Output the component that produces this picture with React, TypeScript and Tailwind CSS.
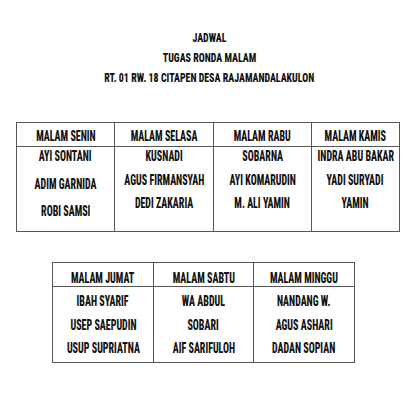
const F = { fontFamily: '"Roboto Condensed", Roboto, "Liberation Sans", sans-serif' };

function T({ children }: { children: React.ReactNode }) {
  return (
    <div className="flex justify-center">
      <span className="inline-block whitespace-nowrap font-extrabold leading-[18px] text-[14px] text-[#111] scale-x-[0.71]">{children}</span>
    </div>
  );
}

const t1 = [
  { h: 'MALAM SENIN', n: ['AYI SONTANI', 'ADIM GARNIDA', 'ROBI SAMSI'], gap: 'gap-[9.5px]' },
  { h: 'MALAM SELASA', n: ['KUSNADI', 'AGUS FIRMANSYAH', 'DEDI ZAKARIA'], gap: 'gap-[5.5px]' },
  { h: 'MALAM RABU', n: ['SOBARNA', 'AYI KOMARUDIN', 'M. ALI YAMIN'], gap: 'gap-[5.5px]' },
  { h: 'MALAM KAMIS', n: ['INDRA ABU BAKAR', 'YADI SURYADI', 'YAMIN'], gap: 'gap-[5.5px]' },
];

const t2 = [
  { h: 'MALAM JUMAT', n: ['IBAH SYARIF', 'USEP SAEPUDIN', 'USUP SUPRIATNA'] },
  { h: 'MALAM SABTU', n: ['WA ABDUL', 'SOBARI', 'AIF SARIFULOH'] },
  { h: 'MALAM MINGGU', n: ['NANDANG W.', 'AGUS ASHARI', 'DADAN SOPIAN'] },
];

export default function App() {
  return (
    <div className="w-[419px] h-[419px] bg-white overflow-hidden" style={F}>
      <div className="pt-[28px] flex flex-col items-center">
        {['JADWAL', 'TUGAS RONDA MALAM', 'RT. 01 RW. 18 CITAPEN DESA RAJAMANDALAKULON'].map((s) => (
          <div key={s} className="h-[20px] flex items-center justify-center">
            <span className="inline-block whitespace-nowrap font-extrabold text-[13px] leading-[20px] text-[#111] scale-x-[0.76]">{s}</span>
          </div>
        ))}
      </div>

      <div className="ml-[16px] mt-[34px] w-[384px] border border-[#555]">
        <div className="grid grid-cols-[98px_99px_98px_87px]">
          {t1.map((c, i) => (
            <div key={c.h} className={`h-[24px] pt-[4px] border-b border-[#555] ${i < 3 ? 'border-r' : ''}`}>
              <T>{c.h}</T>
            </div>
          ))}
          {t1.map((c, i) => (
            <div key={c.h + 'b'} className={`h-[84px] flex flex-col ${c.gap} ${i < 3 ? 'border-r border-[#555]' : ''}`}>
              {c.n.map((n) => (
                <T key={n}>{n}</T>
              ))}
            </div>
          ))}
        </div>
      </div>

      <div className="ml-[52px] mt-[30px] w-[303px] border border-[#555]">
        <div className="grid grid-cols-[101px_100px_100px]">
          {t2.map((c, i) => (
            <div key={c.h} className={`h-[24px] pt-[6px] border-b border-[#555] ${i < 2 ? 'border-r' : ''}`}>
              <T>{c.h}</T>
            </div>
          ))}
          {t2.map((c, i) => (
            <div key={c.h + 'b'} className={`h-[75px] pt-[5px] flex flex-col gap-[5.5px] ${i < 2 ? 'border-r border-[#555]' : ''}`}>
              {c.n.map((n) => (
                <T key={n}>{n}</T>
              ))}
            </div>
          ))}
        </div>
      </div>
    </div>
  );
}
